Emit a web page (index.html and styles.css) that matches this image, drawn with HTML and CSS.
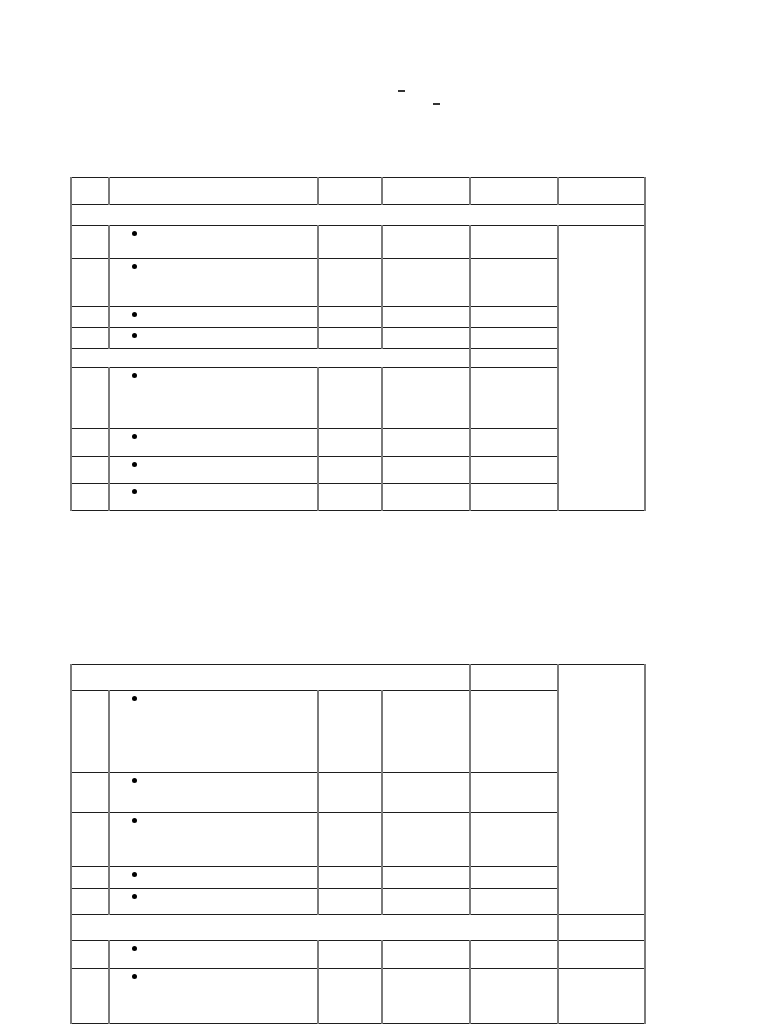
FILE: index.html
```html
<!DOCTYPE html>
<html lang="en">
<head>
<meta charset="utf-8">
<title>Document</title>
<link rel="stylesheet" href="styles.css">
</head>
<body>
<div class="page">
  <div class="heading">
    <div class="heading-line first"><span class="blank"></span></div>
    <div class="heading-line second"><span class="blank"></span></div>
  </div>

  <table class="grid grid-one">
    <colgroup>
      <col class="c1"><col class="c2"><col class="c3"><col class="c4"><col class="c5"><col class="c6">
    </colgroup>
    <tr class="h27"><td></td><td></td><td></td><td></td><td></td><td></td></tr>
    <tr class="h21"><td colspan="6"></td></tr>
    <tr class="h33"><td></td><td><ul class="items"><li></li></ul></td><td></td><td></td><td></td><td rowspan="9"></td></tr>
    <tr class="h48"><td></td><td><ul class="items"><li></li></ul></td><td></td><td></td><td></td></tr>
    <tr class="h21"><td></td><td><ul class="items"><li></li></ul></td><td></td><td></td><td></td></tr>
    <tr class="h21"><td></td><td><ul class="items"><li></li></ul></td><td></td><td></td><td></td></tr>
    <tr class="h19"><td colspan="4"></td><td></td></tr>
    <tr class="h61"><td></td><td><ul class="items"><li></li></ul></td><td></td><td></td><td></td></tr>
    <tr class="h28"><td></td><td><ul class="items"><li></li></ul></td><td></td><td></td><td></td></tr>
    <tr class="h27"><td></td><td><ul class="items"><li></li></ul></td><td></td><td></td><td></td></tr>
    <tr class="h27"><td></td><td><ul class="items"><li></li></ul></td><td></td><td></td><td></td></tr>
  </table>

  <table class="grid grid-two">
    <colgroup>
      <col class="c1"><col class="c2"><col class="c3"><col class="c4"><col class="c5"><col class="c6">
    </colgroup>
    <tr class="h26"><td colspan="4"></td><td></td><td rowspan="6"></td></tr>
    <tr class="h82"><td></td><td><ul class="items"><li></li></ul></td><td></td><td></td><td></td></tr>
    <tr class="h40"><td></td><td><ul class="items"><li></li></ul></td><td></td><td></td><td></td></tr>
    <tr class="h54"><td></td><td><ul class="items"><li></li></ul></td><td></td><td></td><td></td></tr>
    <tr class="h22"><td></td><td><ul class="items"><li></li></ul></td><td></td><td></td><td></td></tr>
    <tr class="h26"><td></td><td><ul class="items"><li></li></ul></td><td></td><td></td><td></td></tr>
    <tr class="h26"><td colspan="5"></td><td></td></tr>
    <tr class="h28"><td></td><td><ul class="items"><li></li></ul></td><td></td><td></td><td></td><td></td></tr>
    <tr class="h55"><td></td><td><ul class="items"><li></li></ul></td><td></td><td></td><td></td><td></td></tr>
  </table>
</div>
</body>
</html>
```

FILE: styles.css
```css
html, body {
  margin: 0;
  padding: 0;
  background: #ffffff;
}

body {
  font-family: "Liberation Sans", Arial, sans-serif;
  font-size: 13px;
  color: #000000;
}

.page {
  width: 768px;
  height: 1024px;
  overflow: hidden;
  padding: 0 0 0 70px;
  box-sizing: border-box;
}

.heading {
  padding-top: 90px;
  height: 177px;
  box-sizing: border-box;
}

.heading-line {
  height: 13px;
  display: flex;
  align-items: flex-start;
}

.heading-line.first {
  padding-left: 328px;
}

.heading-line.second {
  padding-left: 363px;
}

.blank {
  display: inline-block;
  width: 7px;
  height: 2px;
  background: #333333;
}

.grid {
  border-collapse: collapse;
  table-layout: fixed;
  width: 574px;
}

.grid-two {
  margin-top: 153px;
}

.grid td {
  padding: 0;
  vertical-align: top;
  border-top: 1px solid #1e1e1e;
  border-bottom: 1px solid #1e1e1e;
  border-left: 2px solid #7a7a7a;
  border-right: 2px solid #7a7a7a;
}

.c1 { width: 38px; }
.c2 { width: 209px; }
.c3 { width: 64px; }
.c4 { width: 88px; }
.c5 { width: 88px; }
.c6 { width: 87px; }

.h19 { height: 19px; }
.h21 { height: 21px; }
.h22 { height: 22px; }
.h26 { height: 26px; }
.h27 { height: 27px; }
.h28 { height: 28px; }
.h33 { height: 33px; }
.h40 { height: 40px; }
.h48 { height: 48px; }
.h54 { height: 54px; }
.h55 { height: 55px; }
.h61 { height: 61px; }
.h82 { height: 82px; }

.items {
  list-style: none;
  margin: 0;
  padding: 5px 0 0 22px;
}

.items li {
  display: flex;
  height: 5px;
}

.items li::before {
  content: "";
  display: block;
  width: 5px;
  height: 5px;
  border-radius: 50%;
  background: #000000;
}
```
